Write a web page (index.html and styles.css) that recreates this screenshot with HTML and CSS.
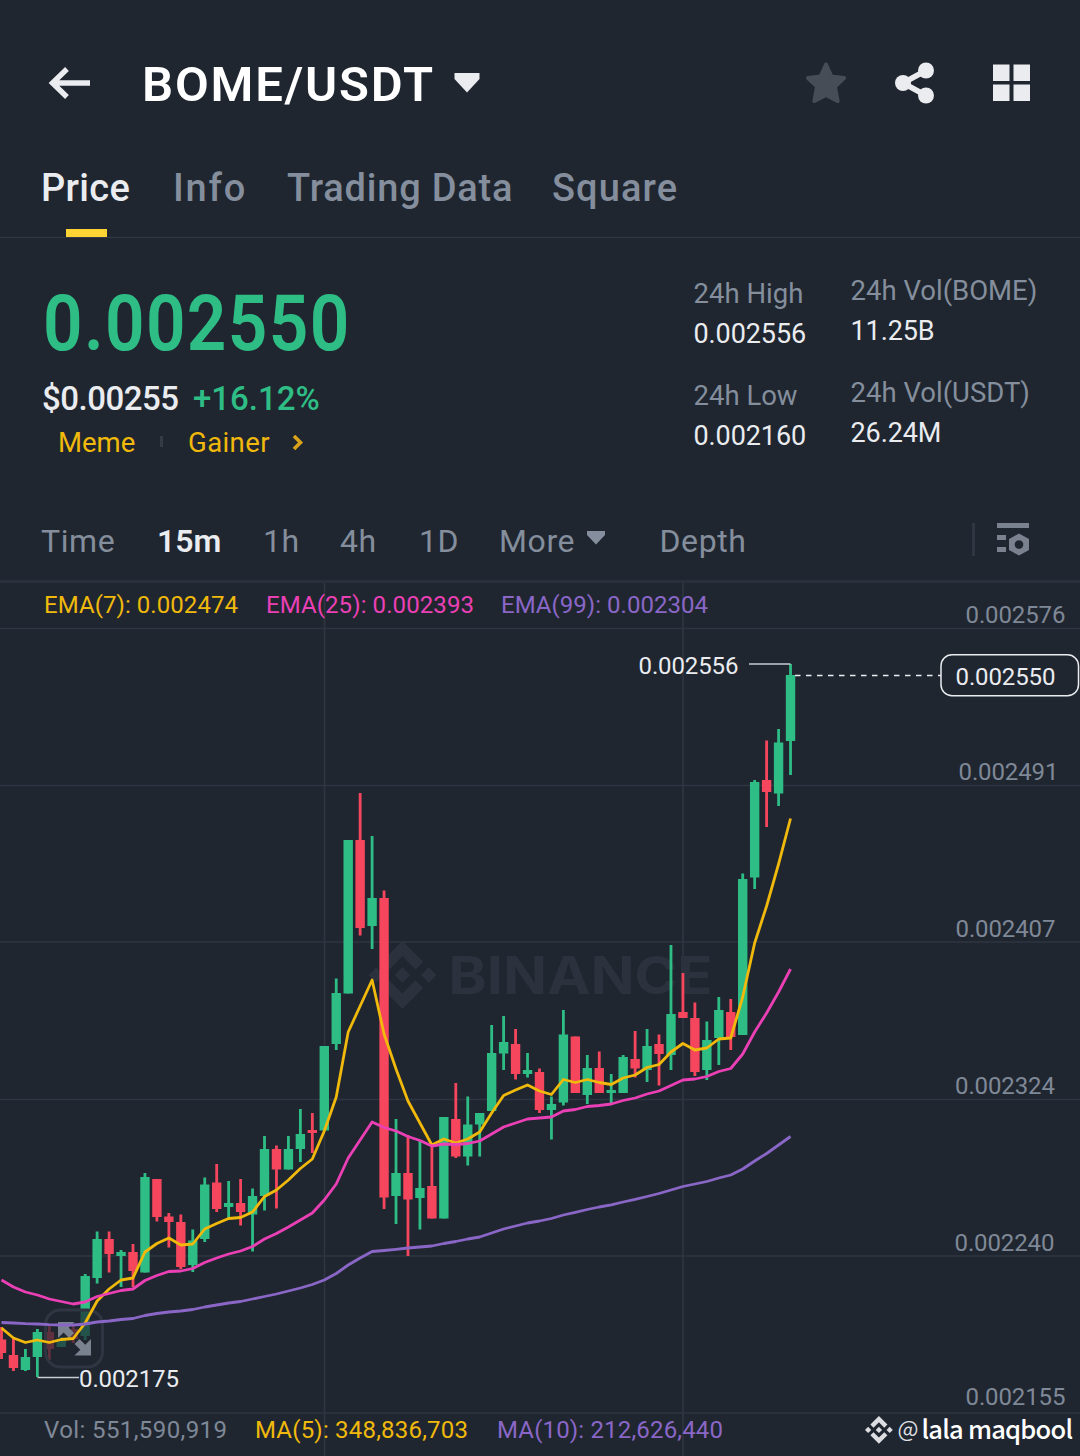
FILE: index.html
```
<!DOCTYPE html>
<html lang="en">
<head>
  <meta charset="UTF-8" />
  <meta name="viewport" content="width=device-width, initial-scale=1.0"/>
  <title>BOME/USDT</title>
  <link rel="stylesheet" href="styles.css">
</head>
<body>
  <header>
    <svg class="back" width="42" height="34" viewBox="0 0 42 34"><path d="M19 3 L4.500 17 L19 31 M5 17 H42" fill="none" stroke="#eaecef" stroke-width="5.4"/></svg>
    <h1>BOME/USDT</h1>
    <svg class="caret" width="26" height="20" viewBox="0 0 26 20"><path d="M0.500 0h25v6L13 19.500 0.500 6z" fill="#eaecef"/></svg>
    <div class="actions">
      <svg width="42" height="42" viewBox="0 0 42 42"><path d="M21 2.500l5.400 12 12.600 1.500-9 8.500 2.600 14.500L21 33 9.400 39 12 24.500 3 16l12.600-1.500z" fill="#474d57" stroke="#474d57" stroke-width="4" stroke-linejoin="round"/></svg>
      <svg width="40" height="42" viewBox="0 0 40 42"><path d="M31 8.500L8 21l23 12.500" fill="none" stroke="#eaecef" stroke-width="5.500"/><circle cx="31" cy="8.500" r="8"/><circle cx="8" cy="21" r="8"/><circle cx="31" cy="33.500" r="8"/></svg>
      <svg width="38" height="38" viewBox="0 0 38 38"><path d="M0 0.500h16.500v16.500h-16.500zM20.500 0.500h16.500v16.500h-16.500zM0 20.500h16.500v16.500h-16.500zM20.500 20.500h16.500v16.500h-16.500z"/></svg>
    </div>
  </header>

  <nav class="tabs">
    <a class="active">Price</a>
    <a>Info</a>
    <a>Trading Data</a>
    <a>Square</a>
  </nav>

  <section class="summary">
    <div class="ticker">
      <div class="price">0.002550</div>
      <div class="change"><span class="usd">$0.00255</span><span class="up">+16.12%</span></div>
      <div class="tags">
        <span class="meme">Meme</span><i></i><span class="gainer">Gainer</span>
        <svg width="12" height="16" viewBox="0 0 12 16"><path d="M2 1L8.500 7.500 2 14" fill="none" stroke="#d9a21b" stroke-width="3.600"/></svg>
      </div>
    </div>
    <dl class="stats">
      <dt>24h High</dt><dd>0.002556</dd>
      <dt>24h Low</dt><dd>0.002160</dd>
    </dl>
    <dl class="stats volume">
      <dt>24h Vol(BOME)</dt><dd>11.25B</dd>
      <dt>24h Vol(USDT)</dt><dd>26.24M</dd>
    </dl>
  </section>

  <div class="intervals">
    <span>Time</span>
    <span class="active">15m</span>
    <span>1h</span>
    <span>4h</span>
    <span>1D</span>
    <span>More <svg width="19" height="14" viewBox="0 0 19 14"><path d="M0 0h18v4L9 13.500 0 4z" fill="#848e9c"/></svg></span>
    <span>Depth</span>
    <svg class="settings" width="60" height="34" viewBox="0 0 60 34"><path d="M1 0h3v33h-3z" fill="#2f3642"/><path fill="#7a8290" fill-rule="evenodd" d="M26 0h32v5h-32zM26 12h9v5h-9zM26 24h9v5h-9zM48 10.500l10 5.500v11l-10 5.500-10-5.500v-11zM48 17.200a4.300 4.300 0 1 0 .01 0z"/></svg>
  </div>

  <main class="chart">
    <svg id="chart" width="1080" height="873" viewBox="0 583 1080 873">
      <g class="grid">
        <path d="M0 628.500H1080M0 785.500H1080M0 942H1080M0 1099.500H1080M0 1256H1080M0 1413H1080M324.500 583V1456M683 583V1456"/>
      </g>
      <g class="watermark">
        <path transform="translate(368.500 941) scale(2.830)" d="M16.624 13.920l2.717 2.715-7.353 7.353-7.353-7.352 2.717-2.716 4.636 4.659 4.636-4.659zm4.637-4.637L24 12l-2.715 2.716L18.568 12l2.693-2.717zm-9.272.001l2.716 2.692-2.716 2.717L9.272 12l2.717-2.716zm-9.273-.001L5.409 12l-2.692 2.692L0 12l2.716-2.717zM11.989.012l7.353 7.329-2.718 2.715-4.635-4.635-4.636 4.659-2.717-2.715z"/>
        <text x="448.500" y="994" textLength="264" lengthAdjust="spacingAndGlyphs">BINANCE</text>
      </g>
      <g id="candles"></g>
      <g class="expand">
        <rect x="45.500" y="1310" width="57" height="57" rx="15"/>
        <path d="M58 1322h16.500L58 1338zM91 1339v16.500H74.500z"/>
        <path class="shaft" d="M62 1326l9.500 9.500M77 1341.500l9.500 9.500"/>
      </g>
      <g id="lines"></g>

      <path class="marker" d="M749 664H790.500M37.500 1377.500H79"/>
      <path class="last" d="M795 675.500H941"/>
      <rect class="pill" x="941" y="654.700" width="137.500" height="41" rx="11"/>

      <g class="label white">
        <text x="638.500" y="674" textLength="100">0.002556</text>
        <text x="79" y="1386.700" textLength="100">0.002175</text>
        <text x="955.500" y="685" textLength="100">0.002550</text>
      </g>
      <g class="label axis">
        <text x="965.500" y="623" textLength="100">0.002576</text>
        <text x="958.500" y="780" textLength="100">0.002491</text>
        <text x="955.500" y="937" textLength="100">0.002407</text>
        <text x="955" y="1094" textLength="100">0.002324</text>
        <text x="954.500" y="1251" textLength="100">0.002240</text>
        <text x="965.500" y="1405" textLength="100">0.002155</text>
        <text x="44" y="1438" textLength="183">Vol: 551,590,919</text>
      </g>
      <g class="label">
        <text class="yellow" x="44" y="613" textLength="194">EMA(7): 0.002474</text>
        <text class="pink" x="266" y="613" textLength="208">EMA(25): 0.002393</text>
        <text class="purple" x="501" y="613" textLength="207">EMA(99): 0.002304</text>
        <text class="yellow" x="255" y="1438" textLength="213">MA(5): 348,836,703</text>
        <text class="purple" x="497" y="1438" textLength="226">MA(10): 212,626,440</text>
      </g>
      <g class="credit">
        <path transform="translate(865 1416) scale(1.160)" d="M16.624 13.920l2.717 2.715-7.353 7.353-7.353-7.352 2.717-2.716 4.636 4.659 4.636-4.659zm4.637-4.637L24 12l-2.715 2.716L18.568 12l2.693-2.717zm-9.272.001l2.716 2.692-2.716 2.717L9.272 12l2.717-2.716zm-9.273-.001L5.409 12l-2.692 2.692L0 12l2.716-2.717zM11.989.012l7.353 7.329-2.718 2.715-4.635-4.635-4.636 4.659-2.717-2.715z"/>
        <text class="at" x="897.500" y="1437" textLength="21" lengthAdjust="spacingAndGlyphs">@</text>
        <text class="name" x="921.500" y="1439" textLength="151.500">lala maqbool</text>
      </g>
    </svg>
  </main>
  <script src="chart.js"></script>
</body>
</html>
```

FILE: styles.css
```
body {
  font-family: Roboto, sans-serif;
  background: #1f2630;
  color: #eaecef;
  margin: 0;
  width: 1080px;
  height: 1456px;
  overflow: hidden;
}

svg {
  display: block;
  flex: none;
}

header {
  box-sizing: border-box;
  height: 140px;
  padding: 25px 49px 0 48px;
  display: flex;
  align-items: center;
}

header h1 {
  width: 312px;
  margin: 4px 0 0 52px;
  font-size: 49px;
  font-weight: 600;
  letter-spacing: 1.8px;
  line-height: 60px;
  color: #fff;
}

.actions {
  margin-left: auto;
  display: flex;
  align-items: center;
  fill: #eaecef;
}

.actions svg:nth-child(2) {
  margin: 0 58px 0 48px;
}

.tabs {
  height: 97px;
  padding-left: 41px;
  display: grid;
  grid-template-columns: 132px 114px 265px 200px;
  border-bottom: 1px solid #323944;
  font-size: 38px;
  font-weight: 500;
  letter-spacing: 0.8px;
  line-height: 97px;
  color: #848e9c;
}

.tabs .active {
  color: #eaecef;
  letter-spacing: 0.3px;
  position: relative;
}

.tabs a:nth-child(2) {
  letter-spacing: 1.8px;
}

.tabs a:nth-child(4) {
  letter-spacing: 1.1px;
}

.tabs .active::after {
  content: "";
  position: absolute;
  left: 25px;
  bottom: 0;
  width: 41px;
  height: 8px;
  background: #fcd535;
}

.summary {
  box-sizing: border-box;
  height: 262px;
  padding: 46px 0 0 42px;
  display: flex;
}

.ticker {
  width: 651.5px;
}

.price {
  font-size: 77px;
  font-weight: 600;
  line-height: 80px;
  color: #2ebd85;
  transform: translateX(1px) scaleX(0.9);
  transform-origin: left;
  letter-spacing: 1.5px;
}

.change {
  margin-top: 15px;
  display: flex;
  font-size: 33px;
  font-weight: 500;
  line-height: 40px;
}

.usd {
  width: 151px;
  letter-spacing: -0.5px;
}

.up {
  color: #2ebd85;
}

.tags {
  margin-top: 7px;
  padding-left: 16px;
  display: flex;
  align-items: center;
  font-size: 27.5px;
  line-height: 34px;
  color: #f0b90b;
}

.meme {
  width: 102px;
}

.tags i {
  width: 3px;
  height: 11px;
  margin-bottom: 3px;
  background: #343b47;
}

.gainer {
  width: 104px;
  margin-left: 25px;
  letter-spacing: 0.4px;
}

.stats {
  width: 157px;
  margin: -10px 0 0;
  font-size: 27.5px;
  line-height: 40px;
  white-space: nowrap;
}

.stats dt {
  color: #848e9c;
}

.stats dd {
  margin: 0 0 22px;
  font-size: 27px;
  letter-spacing: -0.1px;
}

.volume {
  margin-top: -13px;
}

.intervals {
  height: 80px;
  padding: 0 49px 0 41px;
  display: grid;
  grid-template-columns: 116px 106px 77px 79px 80px 160.5px 1fr 60px;
  align-items: center;
  border-bottom: 3px solid #2a303b;
  font-size: 32px;
  letter-spacing: 0.6px;
  line-height: 38px;
  color: #848e9c;
}

.intervals span {
  padding-top: 2px;
}

.intervals .active {
  font-weight: 600;
  letter-spacing: 0;
  color: #eaecef;
}

.intervals span svg {
  display: inline-block;
  margin-left: 3px;
  vertical-align: 7px;
}

.grid path {
  stroke: #2f3642;
  stroke-width: 1.6;
}

.watermark {
  fill: #2c323d;
  font: 700 52px Inter, sans-serif;
}

.green {
  fill: #2ebd85;
}

.red {
  fill: #f6465d;
}

.expand rect {
  fill: #1f2630;
  fill-opacity: 0.7;
  stroke: #2f3642;
  stroke-width: 3;
}

.expand path {
  fill: #7a8290;
}

.expand .shaft {
  stroke: #7a8290;
  stroke-width: 7;
}

#lines polyline {
  fill: none;
  stroke-width: 2.8;
  stroke-linejoin: round;
}

.marker {
  stroke: #c8cbd0;
  stroke-width: 1.6;
}

.last {
  stroke: #eaecef;
  stroke-width: 1.6;
  stroke-dasharray: 5.5 5.5;
}

.pill {
  fill: #1f2630;
  stroke: #eaecef;
  stroke-width: 1.5;
}

.label {
  font-size: 24px;
}

.white {
  fill: #eaecef;
}

.axis {
  fill: #7f8897;
}

.yellow {
  fill: #f0b90b;
}

.pink {
  fill: #eb40b5;
}

.purple {
  fill: #8a67c7;
}

.credit {
  fill: #dcdee1;
  font-family: "Noto Sans CJK SC", sans-serif;
}

.at {
  font-size: 22px;
}

.name {
  font-size: 25.5px;
  font-weight: 500;
  fill: #fff;
}
```

FILE: chart.js
```
const NS = 'http://www.w3.org/2000/svg';
const START = 1.5;
const STEP = 11.955;

// color, wick top, body top, body bottom, wick bottom
const candles = [
  ['r', 1327, 1339.5, 1353, 1359], ['r', 1338, 1355, 1368, 1371], ['g', 1349, 1357, 1370, 1371],
  ['g', 1329, 1332, 1357, 1377], ['r', 1326, 1332, 1349, 1360], ['g', 1337, 1339, 1347, 1347],
  ['r', 1326, 1329, 1339, 1343], ['g', 1274, 1276, 1336, 1340], ['g', 1231.5, 1239, 1278, 1283.5],
  ['r', 1231.5, 1239, 1254, 1272.5], ['g', 1250, 1252, 1256, 1287], ['r', 1244, 1252, 1271, 1287],
  ['g', 1173, 1177, 1272.5, 1272.5], ['r', 1179, 1179, 1217, 1221.5], ['r', 1213, 1216.5, 1222, 1247.5],
  ['r', 1214.5, 1222, 1267, 1269], ['g', 1229.5, 1240.5, 1265, 1272], ['g', 1177.5, 1184.5, 1239, 1242],
  ['r', 1164, 1182.5, 1209, 1212], ['g', 1181, 1203, 1207, 1218.5], ['r', 1179, 1203, 1212, 1225.5],
  ['g', 1188.5, 1196, 1214.5, 1251.5], ['g', 1136, 1149, 1196, 1210.5], ['r', 1145.5, 1149, 1169.5, 1208.5],
  ['g', 1136, 1149, 1169.5, 1169.5], ['g', 1109, 1134, 1149, 1162], ['r', 1113, 1130, 1133, 1153],
  ['g', 1046, 1046, 1130.5, 1130.5], ['g', 978.5, 993, 1044, 1050], ['g', 840, 840, 993.5, 993.5],
  ['r', 793, 840, 928, 935.5], ['g', 836, 898, 926, 949], ['r', 890.5, 898, 1197.5, 1209],
  ['g', 1119, 1173, 1196, 1224], ['r', 1135, 1173, 1199.5, 1256], ['g', 1140, 1188, 1198, 1229.5],
  ['r', 1145, 1186, 1218.5, 1218.5], ['g', 1117, 1117, 1218.5, 1218.5], ['r', 1083, 1119, 1156.5, 1158],
  ['g', 1096.5, 1124.5, 1156.5, 1165.5], ['g', 1113, 1113, 1124.5, 1156.5], ['g', 1025, 1053, 1111, 1111],
  ['g', 1016, 1042, 1053.5, 1070], ['r', 1029, 1044, 1074, 1079.5], ['g', 1053, 1070, 1074, 1077.5],
  ['r', 1068.5, 1072, 1110, 1113], ['g', 1096.5, 1104, 1110, 1139.5], ['g', 1010, 1034.5, 1102.5, 1105.5],
  ['r', 1036.5, 1036.5, 1093, 1093], ['g', 1055, 1068, 1095, 1104], ['r', 1051.5, 1068, 1093, 1093],
  ['g', 1074, 1090, 1093, 1105], ['g', 1055, 1057, 1093, 1093], ['r', 1031, 1059, 1068.5, 1077.5],
  ['g', 1029, 1046, 1070, 1082], ['r', 1034.5, 1044, 1054, 1085.5], ['g', 945, 1014, 1055, 1070],
  ['r', 973, 1012, 1018, 1018], ['r', 1002.5, 1018, 1072, 1076], ['g', 1021.5, 1040, 1070, 1080],
  ['g', 997, 1010, 1038, 1065], ['r', 999, 1012, 1037, 1050], ['g', 873.5, 879, 1035, 1035],
  ['g', 780, 782, 877.5, 889], ['r', 740.5, 780, 792, 827], ['g', 729, 742.5, 793.5, 806],
  ['g', 664, 675, 741, 775]
];

const ema7 = [1328, 1338, 1342.5, 1340, 1342.5, 1339.5, 1338.5, 1323, 1301, 1289, 1280, 1278, 1252, 1243.5, 1238,
  1245, 1244, 1229, 1223.5, 1218.5, 1217.5, 1212, 1196.5, 1190, 1180, 1168.5, 1159, 1131, 1097, 1032, 1006, 980,
  1034, 1069, 1101, 1123, 1145, 1139, 1143, 1139, 1132, 1113, 1095.5, 1090, 1085, 1091, 1094.5, 1079.5, 1082.5,
  1079.5, 1082.5, 1084.5, 1078, 1075, 1067.5, 1064.5, 1052, 1043.5, 1050, 1048, 1039, 1038, 997, 943, 906, 864, 818.5];

const ema25 = [1280, 1287, 1292, 1295, 1299, 1301.5, 1304, 1302, 1296.5, 1293.5, 1290.5, 1289, 1280.5, 1275.5,
  1271.5, 1271, 1268.5, 1262.5, 1258, 1254, 1251, 1246.5, 1239, 1233.5, 1227, 1220, 1213, 1200, 1184, 1158, 1140,
  1122, 1127.5, 1131, 1136.5, 1140.5, 1146, 1144, 1144.5, 1143.5, 1141, 1134, 1127, 1123, 1119, 1118, 1117, 1111,
  1109.5, 1106.5, 1105.5, 1104, 1100.5, 1098, 1094, 1091, 1085.5, 1080, 1079, 1076.5, 1071.5, 1068.5, 1054, 1032,
  1013, 992, 969];

const ema99 = [1322.5, 1323, 1323.7, 1324, 1324.7, 1325, 1325, 1324, 1322, 1321, 1319.5, 1318.5, 1315.5, 1313.5,
  1312, 1311, 1309.5, 1307, 1305, 1303, 1301.5, 1299, 1296.5, 1294, 1291, 1288, 1284.5, 1280, 1273.5, 1265, 1258,
  1251.5, 1250.5, 1249.3, 1248, 1247, 1246, 1243.5, 1241.5, 1239, 1237, 1233, 1229, 1226, 1223, 1221, 1218.5, 1215,
  1212.3, 1209.5, 1207, 1204.8, 1202, 1199.3, 1196.5, 1193.5, 1190, 1186.5, 1184, 1181.5, 1178, 1175, 1169, 1161,
  1153.5, 1145, 1136.5];

function addRect(parent, cls, x, y, w, h) {
  const rect = document.createElementNS(NS, 'rect');
  rect.setAttribute('class', cls);
  rect.setAttribute('x', x);
  rect.setAttribute('y', y);
  rect.setAttribute('width', w);
  rect.setAttribute('height', h);
  parent.appendChild(rect);
}

function addLine(values, color) {
  const line = document.createElementNS(NS, 'polyline');
  line.setAttribute('points', values.map((y, i) => `${START + i * STEP},${y}`).join(' '));
  line.setAttribute('stroke', color);
  document.getElementById('lines').appendChild(line);
}

const group = document.getElementById('candles');
candles.forEach(([color, high, top, bottom, low], i) => {
  const x = START + i * STEP;
  const cls = color === 'g' ? 'green' : 'red';
  addRect(group, cls, x - 1.4, high, 2.8, low - high);
  addRect(group, cls, x - 4.7, top, 9.4, bottom - top);
});

addLine(ema7, '#f0b90b');
addLine(ema99, '#8a67c7');
addLine(ema25, '#eb40b5');
```
